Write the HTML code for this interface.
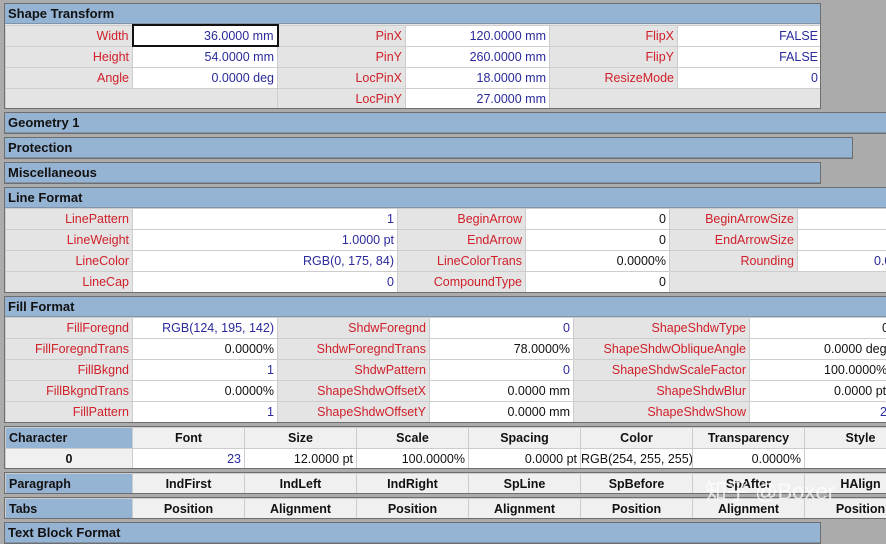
<!DOCTYPE html>
<html><head><meta charset="utf-8"><style>
*{margin:0;padding:0;box-sizing:border-box}
body{width:886px;height:530px;overflow:hidden;background:#ababab;font-family:"Liberation Sans","Noto Sans CJK SC",sans-serif;font-size:12.5px;position:relative}
.s{position:absolute;border:1px solid #6e6e6e;background:#e4e4e4;overflow:hidden}
.h{background:#95b3d3;height:20px;line-height:20px;font-weight:bold;padding-left:3px;font-size:13px;color:#111;border-bottom:1px solid #7f93ab}
table{border-collapse:collapse;table-layout:fixed}
td{height:21px;border:1px solid #cdcdcd;white-space:nowrap;overflow:hidden;padding:0 3px;text-align:right}
td.l{background:#e4e4e4;color:#d0202a}
td.v{background:#fff;color:#111}
td.b{color:#2a2a9c}
td.e{background:#e4e4e4}
td.c{text-align:center;font-weight:bold;background:#f0f0f0;color:#111}
td.hb{background:#95b3d3;text-align:left;font-weight:bold;color:#111}
.wm{position:absolute;left:705px;top:474px;font-size:22px;color:rgba(255,255,255,.75);font-family:"Liberation Sans","Noto Sans CJK SC",sans-serif}
</style></head><body>

<div class="s" style="left:4px;top:3px;width:817px;height:106px">
<div class="h">Shape Transform</div>
<table style="width:816px"><colgroup><col style="width:127px"><col style="width:145px"><col style="width:128px"><col style="width:144px"><col style="width:128px"><col style="width:144px"></colgroup>
<tr><td class="l">Width</td><td class="v b" style="border:2px solid #111">36.0000 mm</td><td class="l">PinX</td><td class="v b">120.0000 mm</td><td class="l">FlipX</td><td class="v b">FALSE</td></tr>
<tr><td class="l">Height</td><td class="v b">54.0000 mm</td><td class="l">PinY</td><td class="v b">260.0000 mm</td><td class="l">FlipY</td><td class="v b">FALSE</td></tr>
<tr><td class="l">Angle</td><td class="v b">0.0000 deg</td><td class="l">LocPinX</td><td class="v b">18.0000 mm</td><td class="l">ResizeMode</td><td class="v b">0</td></tr>
<tr><td class="e" colspan="2"></td><td class="l">LocPinY</td><td class="v b">27.0000 mm</td><td class="e" colspan="2"></td></tr>
</table></div>

<div class="s" style="left:4px;top:112px;width:890px;height:22px"><div class="h">Geometry 1</div></div>
<div class="s" style="left:4px;top:137px;width:849px;height:22px"><div class="h">Protection</div></div>
<div class="s" style="left:4px;top:162px;width:817px;height:22px"><div class="h">Miscellaneous</div></div>

<div class="s" style="left:4px;top:187px;width:890px;height:106px">
<div class="h">Line Format</div>
<table style="width:892px"><colgroup><col style="width:127px"><col style="width:265px"><col style="width:128px"><col style="width:144px"><col style="width:128px"><col style="width:100px"></colgroup>
<tr><td class="l">LinePattern</td><td class="v b">1</td><td class="l">BeginArrow</td><td class="v">0</td><td class="l">BeginArrowSize</td><td class="v"></td></tr>
<tr><td class="l">LineWeight</td><td class="v b">1.0000 pt</td><td class="l">EndArrow</td><td class="v">0</td><td class="l">EndArrowSize</td><td class="v"></td></tr>
<tr><td class="l">LineColor</td><td class="v b">RGB(0, 175, 84)</td><td class="l">LineColorTrans</td><td class="v">0.0000%</td><td class="l">Rounding</td><td class="v b" style="text-align:left;padding-left:76px">0.0</td></tr>
<tr><td class="l">LineCap</td><td class="v b">0</td><td class="l">CompoundType</td><td class="v">0</td><td class="e" colspan="2"></td></tr>
</table></div>

<div class="s" style="left:4px;top:296px;width:890px;height:127px">
<div class="h">Fill Format</div>
<table style="width:884px"><colgroup><col style="width:127px"><col style="width:145px"><col style="width:152px"><col style="width:144px"><col style="width:176px"><col style="width:140px"></colgroup>
<tr><td class="l">FillForegnd</td><td class="v b">RGB(124, 195, 142)</td><td class="l">ShdwForegnd</td><td class="v b">0</td><td class="l">ShapeShdwType</td><td class="v" style="text-align:left;padding-left:132px">0</td></tr>
<tr><td class="l">FillForegndTrans</td><td class="v">0.0000%</td><td class="l">ShdwForegndTrans</td><td class="v">78.0000%</td><td class="l">ShapeShdwObliqueAngle</td><td class="v" style="text-align:left;padding-left:74px">0.0000 deg</td></tr>
<tr><td class="l">FillBkgnd</td><td class="v b">1</td><td class="l">ShdwPattern</td><td class="v b">0</td><td class="l">ShapeShdwScaleFactor</td><td class="v" style="text-align:left;padding-left:74px">100.0000%</td></tr>
<tr><td class="l">FillBkgndTrans</td><td class="v">0.0000%</td><td class="l">ShapeShdwOffsetX</td><td class="v">0.0000 mm</td><td class="l">ShapeShdwBlur</td><td class="v" style="text-align:left;padding-left:84px">0.0000 pt</td></tr>
<tr><td class="l">FillPattern</td><td class="v b">1</td><td class="l">ShapeShdwOffsetY</td><td class="v">0.0000 mm</td><td class="l">ShapeShdwShow</td><td class="v b" style="text-align:left;padding-left:130px">2</td></tr>
</table></div>

<div class="s" style="left:4px;top:426px;width:890px;height:43px">
<table style="width:911px"><colgroup><col style="width:127px"><col style="width:112px"><col style="width:112px"><col style="width:112px"><col style="width:112px"><col style="width:112px"><col style="width:112px"><col style="width:112px"></colgroup>
<tr><td class="hb">Character</td><td class="c">Font</td><td class="c">Size</td><td class="c">Scale</td><td class="c">Spacing</td><td class="c">Color</td><td class="c">Transparency</td><td class="c">Style</td></tr>
<tr><td class="c">0</td><td class="v b">23</td><td class="v">12.0000 pt</td><td class="v">100.0000%</td><td class="v">0.0000 pt</td><td class="v" style="text-align:left;padding-left:0">RGB(254, 255, 255)</td><td class="v">0.0000%</td><td class="v"></td></tr>
</table></div>

<div class="s" style="left:4px;top:472px;width:890px;height:22px">
<table style="width:911px"><colgroup><col style="width:127px"><col style="width:112px"><col style="width:112px"><col style="width:112px"><col style="width:112px"><col style="width:112px"><col style="width:112px"><col style="width:112px"></colgroup>
<tr><td class="hb">Paragraph</td><td class="c">IndFirst</td><td class="c">IndLeft</td><td class="c">IndRight</td><td class="c">SpLine</td><td class="c">SpBefore</td><td class="c">SpAfter</td><td class="c">HAlign</td></tr>
</table></div>

<div class="s" style="left:4px;top:497px;width:890px;height:22px">
<table style="width:911px"><colgroup><col style="width:127px"><col style="width:112px"><col style="width:112px"><col style="width:112px"><col style="width:112px"><col style="width:112px"><col style="width:112px"><col style="width:112px"></colgroup>
<tr><td class="hb">Tabs</td><td class="c">Position</td><td class="c">Alignment</td><td class="c">Position</td><td class="c">Alignment</td><td class="c">Position</td><td class="c">Alignment</td><td class="c">Position</td></tr>
</table></div>

<div class="s" style="left:4px;top:522px;width:817px;height:22px"><div class="h">Text Block Format</div></div>

<div class="wm">知乎 @Boxer</div>
</body></html>
